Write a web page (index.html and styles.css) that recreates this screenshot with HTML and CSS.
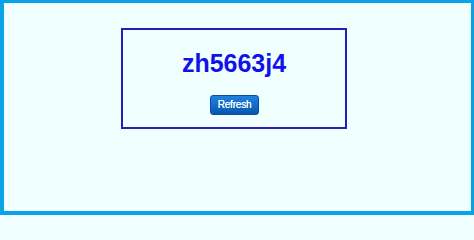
FILE: index.html
```html
<!DOCTYPE html>
<html>
<head>
<meta charset="utf-8">
<link rel="stylesheet" href="styles.css">
</head>
<body>
<div class="frame">
  <div class="captcha-box">
    <div class="code">zh5663j4</div>
    <button class="refresh">Refresh</button>
  </div>
</div>
</body>
</html>
```
FILE: styles.css
```css
html, body {
  margin: 0;
  padding: 0;
}
body {
  font-family: "Liberation Sans", Arial, sans-serif;
  background: #f0ffff;
}
.frame {
  box-sizing: border-box;
  height: 215px;
  border-style: solid;
  border-color: #0aa2e6;
  border-width: 3px 3px 4px 4px;
  background: #f0ffff;
  display: flex;
  justify-content: center;
  align-items: flex-start;
  padding: 25px 7px 0 0;
}
.captcha-box {
  box-sizing: border-box;
  width: 226px;
  height: 101px;
  border: 2px solid #2a1cb6;
  padding: 19px 0 0;
  display: flex;
  flex-direction: column;
  align-items: center;
}
.code {
  font-size: 25px;
  line-height: 29px;
  font-weight: bold;
  color: #1212e6;
  margin-bottom: 17px;
}
.refresh {
  box-sizing: border-box;
  width: 49px;
  height: 20px;
  padding: 0;
  margin-left: 1px;
  border: 1px solid #0a4f9c;
  border-radius: 3px;
  background: linear-gradient(to bottom, #1f82e0, #0657ad);
  color: #ffffff;
  font-family: "Liberation Sans", Arial, sans-serif;
  font-size: 10px;
  letter-spacing: -0.2px;
  line-height: 18px;
  text-shadow: 0 0 0.4px #ffffff;
}
```
